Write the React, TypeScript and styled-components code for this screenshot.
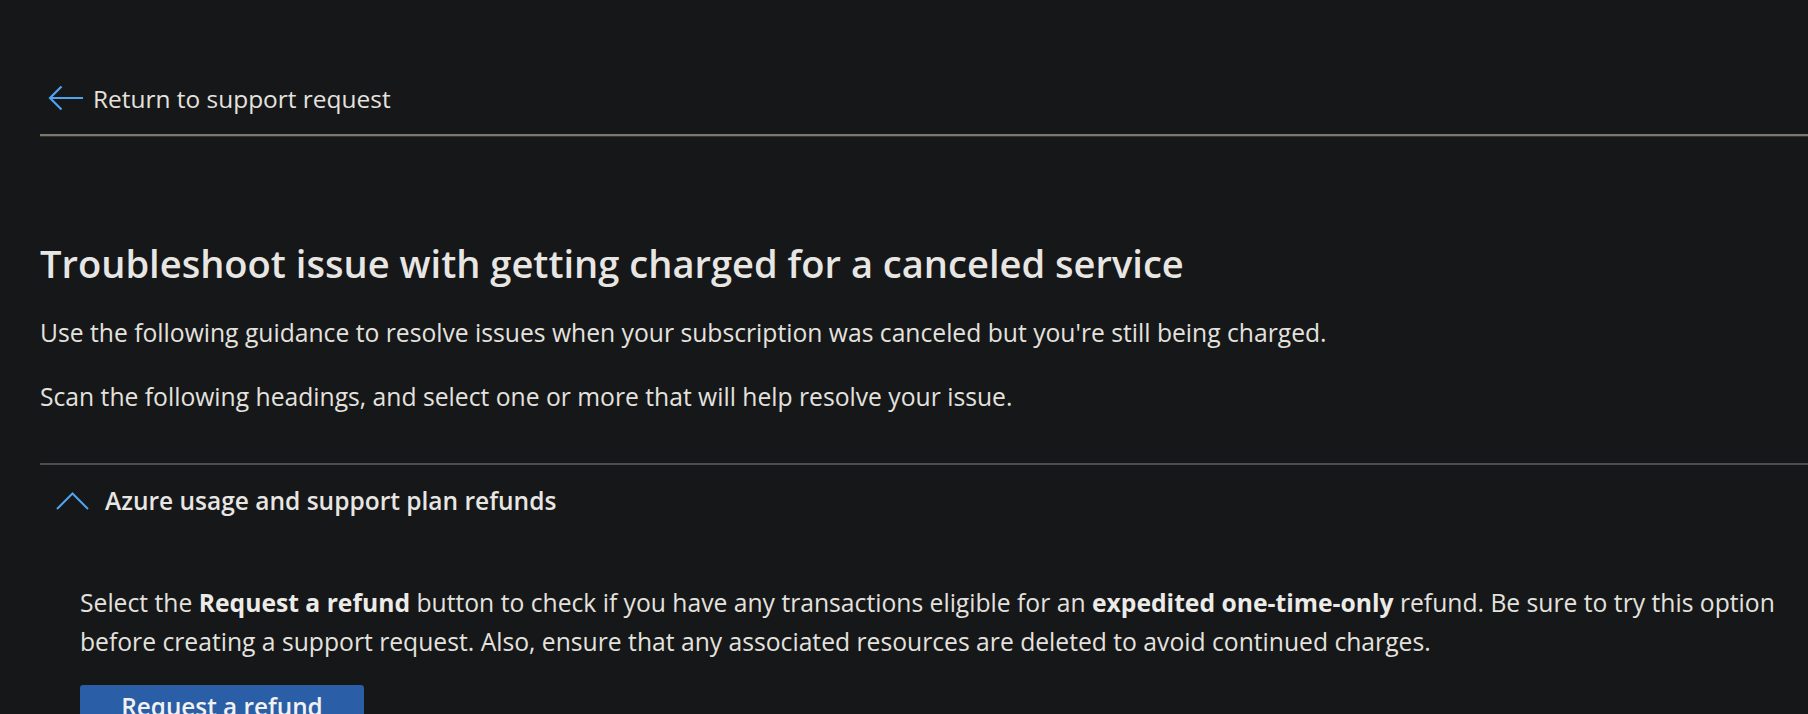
import React from "react";
import styled, { createGlobalStyle } from "styled-components";

const GlobalStyle = createGlobalStyle`
  html, body {
    margin: 0;
    padding: 0;
    background: #161719;
  }
  body {
    font-family: "Open Sans", "Noto Sans", Lato, sans-serif;
    color: #e4e2df;
    -webkit-font-smoothing: antialiased;
  }
`;

const Page = styled.main`
  min-height: 714px;
  padding-left: 40px;
  overflow: hidden;
`;

const TopBar = styled.nav`
  padding: 74px 0 12px;
  border-bottom: 2px solid #7d786f;
  box-shadow: 0 1px 0 #34332f;
`;

const BackLink = styled.a`
  display: inline-flex;
  align-items: center;
  gap: 9px;
  height: 48px;
  padding-left: 8px;
  font-size: 24.45px;
  color: #e4e2df;
  text-decoration: none;
  cursor: pointer;
`;

const Title = styled.h1`
  margin: 103.2px 0 0;
  font-size: 38.1px;
  line-height: 48px;
  font-weight: 600;
  color: #e8e6e3;
`;

const Lead = styled.p<{ $gap: number }>`
  margin: ${(p) => p.$gap}px 0 0;
  font-size: 24.68px;
  line-height: 32px;
`;

const Accordion = styled.section`
  margin-top: 49.6px;
  border-top: 2px solid #4a4e53;
`;

const AccordionHeader = styled.button`
  display: flex;
  align-items: center;
  gap: 16px;
  margin-top: 20.5px;
  padding: 0 0 0 16px;
  border: 0;
  background: none;
  font-family: inherit;
  font-size: 24.5px;
  line-height: 32px;
  font-weight: 600;
  color: #e8e6e3;
  cursor: pointer;
`;

const AccordionBody = styled.div`
  padding: 65.5px 16px 0 40px;
`;

const BodyText = styled.p`
  margin: 0;
  font-size: 24.68px;
  line-height: 39px;

  strong {
    font-weight: 700;
    color: #ecebe8;
  }
`;

const PrimaryButton = styled.button`
  margin-top: 24px;
  width: 284px;
  padding: 5.6px 0;
  border: 0;
  border-radius: 3px;
  background: #2a5ea7;
  font-family: inherit;
  font-size: 24.3px;
  line-height: 32px;
  font-weight: 600;
  color: #f2f1ef;
  cursor: pointer;
`;

const ArrowLeft = () => (
  <svg width="36" height="26" viewBox="0 0 36 26" fill="none" aria-hidden>
    <path
      d="M35 13H2M13.5 1.5L2 13l11.5 11.5"
      stroke="#4fa3ef"
      strokeWidth="2.2"
      strokeLinejoin="miter"
    />
  </svg>
);

const ChevronUp = () => (
  <svg width="33" height="18" viewBox="0 0 33 18" fill="none" aria-hidden>
    <path d="M1 17L16.5 1.5 32 17" stroke="#4fa3ef" strokeWidth="2" />
  </svg>
);

export default function App() {
  return (
    <>
      <GlobalStyle />
      <Page>
        <TopBar>
          <BackLink>
            <ArrowLeft />
            Return to support request
          </BackLink>
        </TopBar>
        <Title>Troubleshoot issue with getting charged for a canceled service</Title>
        <Lead $gap={29.6}>
          Use the following guidance to resolve issues when your subscription was canceled but
          you're still being charged.
        </Lead>
        <Lead $gap={32.6}>
          Scan the following headings, and select one or more that will help resolve your issue.
        </Lead>
        <Accordion>
          <AccordionHeader>
            <ChevronUp />
            Azure usage and support plan refunds
          </AccordionHeader>
          <AccordionBody>
            <BodyText>
              Select the <strong>Request a refund</strong> button to check if you have any
              transactions eligible for an <strong>expedited one-time-only</strong> refund. Be
              sure to try this option before creating a support request. Also, ensure that any
              associated resources are deleted to avoid continued charges.
            </BodyText>
            <PrimaryButton>Request a refund</PrimaryButton>
          </AccordionBody>
        </Accordion>
      </Page>
    </>
  );
}
